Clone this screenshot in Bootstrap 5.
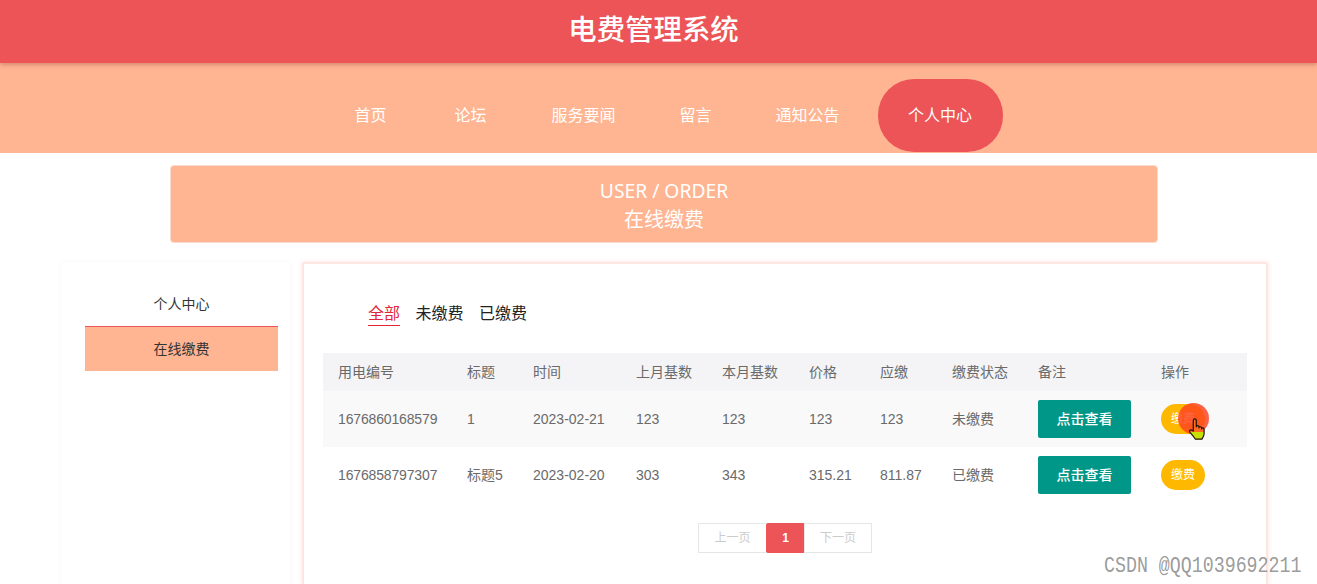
<!DOCTYPE html>
<html lang="zh-CN">
<head>
<meta charset="utf-8">
<title>电费管理系统</title>
<link href="https://cdn.jsdelivr.net/npm/bootstrap@5.3.0/dist/css/bootstrap.min.css" rel="stylesheet">
<style>
html,body{height:584px;overflow:hidden;background:#fff}
body{font-family:"Liberation Sans","Noto Sans CJK SC",sans-serif;font-size:14px;color:#666;position:relative}
.top-head{height:63px;background:#ec5457;color:#fff;font-size:28.4px;font-weight:500;box-shadow:0 2px 4px rgba(150,60,50,.35);position:relative;padding:0 10px 3px 0}
.top-nav{height:90px;background:#ffb592;padding:16px 0 1px 8px}
.nav-cell{color:#fff;font-size:16px;padding:0 32px;height:73px;text-decoration:none}
.nav-cell.lead-cell{margin-right:4px}
.nav-cell.next-cell{margin-right:1px}
.nav-cell.on{background:#ec5457;border-radius:36px/36px;width:125px;padding:0;margin-left:6px}
.page-title{width:988px;height:78px;margin:12px 0 19px 170px;background:#ffb592;border:1px solid #f9dccd;border-radius:4px;color:#fff;font-size:20px;line-height:29px;padding-top:10px}
.page-title div:first-child{font-family:"Noto Sans","Noto Sans CJK SC",sans-serif;font-size:19.3px;margin-bottom:1px}
.body-zone{padding-left:61px;gap:12px}
.side-box{width:229px;height:322px;padding:20px 12px 0 24px;box-shadow:0 0 4px rgba(240,225,220,.3)}
.side-item{height:44px;color:#333}
.side-item.first{border-bottom:1px solid #ec5457;height:45px}
.side-item.cur{background:#ffb592;color:#333}
.main-box{width:966px;height:322px;border:2px solid #fde6e2;border-bottom:0;box-shadow:0 0 4px rgba(250,200,190,.5);border-radius:3px 3px 0 0;padding:0 19px}
.tab-row{gap:15.5px;padding:31px 0 0 45px;height:89px;font-size:16px;color:#222}
.tab-word{height:31px;line-height:38px}
.tab-word.on{color:#e2253a;border-bottom:1px solid #e2253a}
.bill-table.table{table-layout:fixed;width:924px;margin:0;color:#666}
.bill-table.table>:not(caption)>*>*{padding:0 0 0 15px;border:0;vertical-align:middle;background:transparent;color:#6a6a6a;box-shadow:none}
.bill-table thead tr{height:38px;background:#f4f4f6}
.bill-table tbody tr{height:56px}
.bill-table tbody tr:first-child{background:#f9f9fa}
.bill-table.table>tbody>tr>td.code-cell{letter-spacing:-.15px}
.view-btn{width:93px;height:38px;background:#009688;color:#fff;border:0;border-radius:2px;font-size:14px;font-weight:500;padding:0}
.view-btn:hover{background:#009688;color:#fff}
.pay-btn{width:44px;height:30px;background:#ffb800;color:#fff;border:0;border-radius:15px;font-size:12px;padding:0}
.pay-btn:hover{background:#ffb800;color:#fff}
.pay-cell{position:relative;display:inline-block}
.click-dot{position:absolute;left:17px;top:-1px;width:31px;height:31px;border-radius:50%;background:rgba(255,65,30,.82)}
.hand-mark{position:absolute;left:26px;top:13px;width:19px;height:26px}
.pager-row{margin-top:20px;margin-left:375px}
.pager-row .page-item .page-link{height:30px;font-size:12px;line-height:28px;padding:0;color:#ccc;border-color:#e6e6e6;text-align:center;background:#fff;border-radius:0}
.pager-row .page-item:nth-child(1) .page-link{width:69px}
.pager-row .page-item:nth-child(2) .page-link{width:39px;background:#ec5457;border-color:#ec5457;color:#fff;font-weight:700;border-radius:2px}
.pager-row .page-item:nth-child(3) .page-link{width:68px}
.wm-text{position:absolute;left:1104px;top:556px;font-family:"Liberation Mono",monospace;font-size:18.3px;line-height:20px;color:rgba(90,90,90,.62);transform:scaleY(1.2)}
</style>
</head>
<body>
<header class="top-head d-flex align-items-center justify-content-center">电费管理系统</header>
<nav class="top-nav d-flex justify-content-center">
  <a class="nav-cell lead-cell d-flex align-items-center" href="#">首页</a>
  <a class="nav-cell next-cell d-flex align-items-center" href="#">论坛</a>
  <a class="nav-cell d-flex align-items-center" href="#">服务要闻</a>
  <a class="nav-cell d-flex align-items-center" href="#">留言</a>
  <a class="nav-cell d-flex align-items-center" href="#">通知公告</a>
  <a class="nav-cell on d-flex align-items-center justify-content-center" href="#">个人中心</a>
</nav>
<div class="page-title text-center">
  <div>USER / ORDER</div>
  <div>在线缴费</div>
</div>
<div class="body-zone d-flex">
  <aside class="side-box bg-white">
    <div class="side-item first d-flex align-items-center justify-content-center">个人中心</div>
    <div class="side-item cur d-flex align-items-center justify-content-center">在线缴费</div>
  </aside>
  <main class="main-box bg-white">
    <div class="tab-row d-flex align-items-start">
      <div class="tab-word on">全部</div>
      <div class="tab-word">未缴费</div>
      <div class="tab-word">已缴费</div>
    </div>
    <table class="table bill-table">
      <colgroup>
        <col style="width:129px"><col style="width:66px"><col style="width:103px"><col style="width:86px"><col style="width:87px"><col style="width:71px"><col style="width:72px"><col style="width:86px"><col style="width:123px"><col style="width:101px">
      </colgroup>
      <thead>
        <tr><th class="fw-normal">用电编号</th><th class="fw-normal">标题</th><th class="fw-normal">时间</th><th class="fw-normal">上月基数</th><th class="fw-normal">本月基数</th><th class="fw-normal">价格</th><th class="fw-normal">应缴</th><th class="fw-normal">缴费状态</th><th class="fw-normal">备注</th><th class="fw-normal">操作</th></tr>
      </thead>
      <tbody>
        <tr><td class="code-cell">1676860168579</td><td>1</td><td>2023-02-21</td><td>123</td><td>123</td><td>123</td><td>123</td><td>未缴费</td><td><button class="btn view-btn">点击查看</button></td><td><span class="pay-cell"><button class="btn pay-btn">缴费</button><span class="click-dot"></span><svg class="hand-mark" viewBox="0 0 17 24"><defs><linearGradient id="handFill" x1="0" y1="0" x2="0" y2="1"><stop offset="0.62" stop-color="#ff6a20"/><stop offset="0.66" stop-color="#c8e000"/></linearGradient></defs><path d="M5.5 13V3.2c0-2 2.8-2 2.8 0V9c0-1.4 2.5-1.4 2.5 0v1c0-1.3 2.4-1.3 2.4 0v1c0-1.2 2.3-1.2 2.3.2v4.3c0 2.2-1 3.6-2 5H7.5c-1.2-1.8-2.4-3.3-5-6.3-1.3-1.6.8-3 2-1.8z" fill="url(#handFill)" stroke="#1c1208" stroke-width="1.1" stroke-linejoin="round"/></svg></span></td></tr>
        <tr><td class="code-cell">1676858797307</td><td>标题5</td><td>2023-02-20</td><td>303</td><td>343</td><td>315.21</td><td>811.87</td><td>已缴费</td><td><button class="btn view-btn">点击查看</button></td><td><button class="btn pay-btn">缴费</button></td></tr>
      </tbody>
    </table>
    <ul class="pagination pager-row">
      <li class="page-item"><a class="page-link" href="#">上一页</a></li>
      <li class="page-item"><a class="page-link" href="#">1</a></li>
      <li class="page-item"><a class="page-link" href="#">下一页</a></li>
    </ul>
  </main>
</div>
<div class="wm-text">CSDN @QQ1039692211</div>
<script src="https://cdn.jsdelivr.net/npm/bootstrap@5.3.0/dist/js/bootstrap.bundle.min.js"></script>
</body>
</html>
